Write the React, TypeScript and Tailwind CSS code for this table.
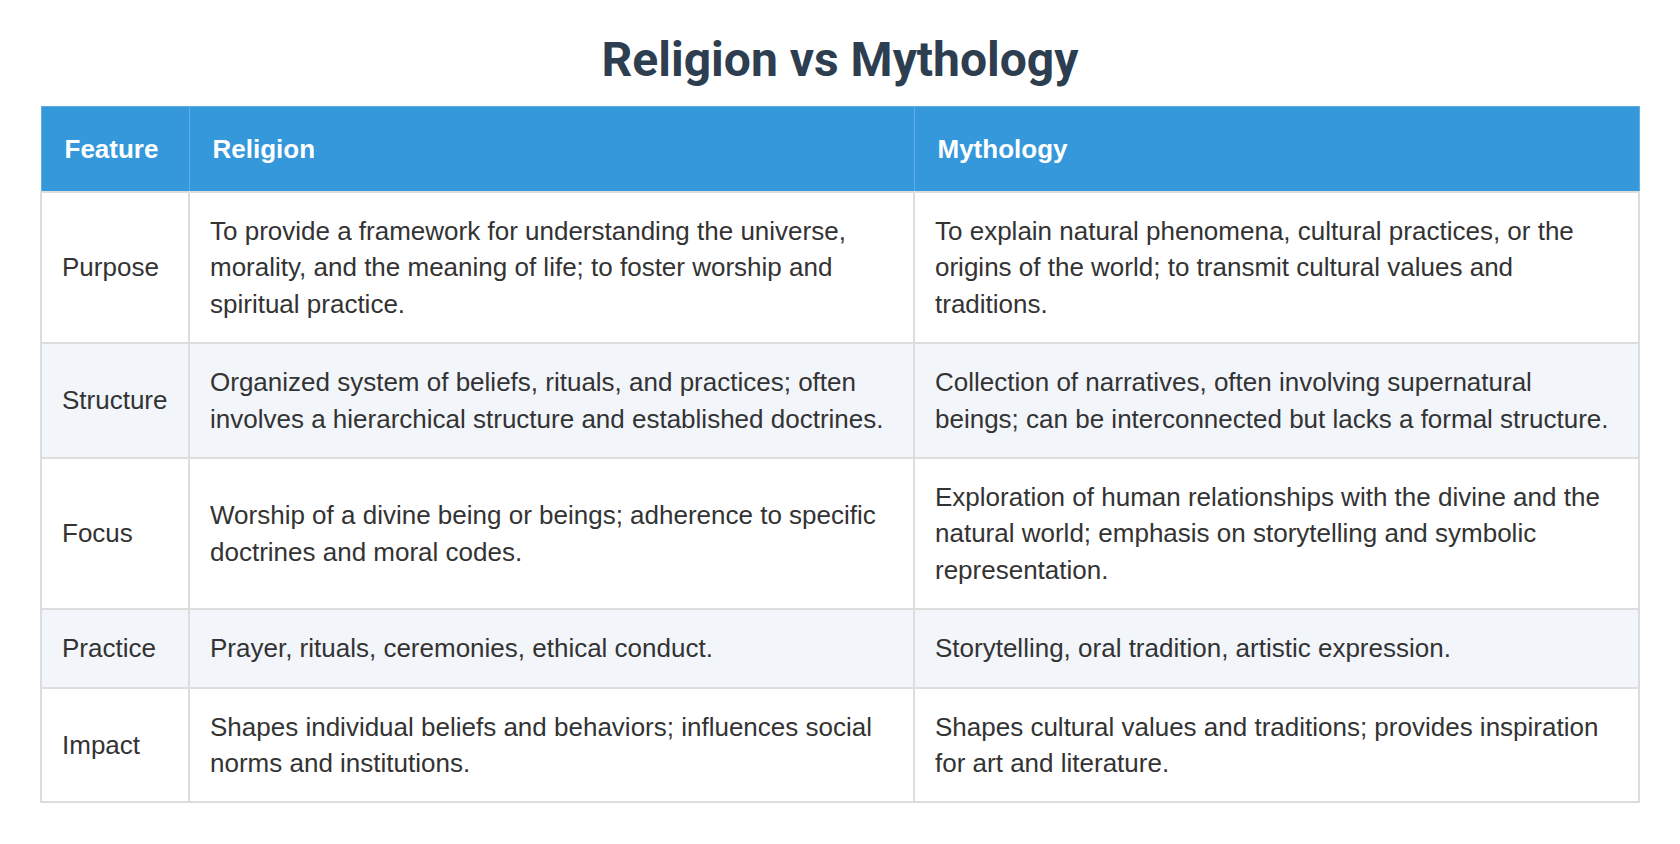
const rows = [
  {
    feature: "Purpose",
    religion:
      "To provide a framework for understanding the universe, morality, and the meaning of life; to foster worship and spiritual practice.",
    mythology:
      "To explain natural phenomena, cultural practices, or the origins of the world; to transmit cultural values and traditions.",
  },
  {
    feature: "Structure",
    religion:
      "Organized system of beliefs, rituals, and practices; often involves a hierarchical structure and established doctrines.",
    mythology:
      "Collection of narratives, often involving supernatural beings; can be interconnected but lacks a formal structure.",
  },
  {
    feature: "Focus",
    religion: "Worship of a divine being or beings; adherence to specific doctrines and moral codes.",
    mythology:
      "Exploration of human relationships with the divine and the natural world; emphasis on storytelling and symbolic representation.",
  },
  {
    feature: "Practice",
    religion: "Prayer, rituals, ceremonies, ethical conduct.",
    mythology: "Storytelling, oral tradition, artistic expression.",
  },
  {
    feature: "Impact",
    religion: "Shapes individual beliefs and behaviors; influences social norms and institutions.",
    mythology: "Shapes cultural values and traditions; provides inspiration for art and literature.",
  },
];

export default function App() {
  return (
    <div className="min-h-screen bg-white px-10 pt-[31px] font-['Liberation_Sans',Arial,sans-serif] text-[#333333]">
      <h1 className="mb-[17px] text-center font-['Roboto',Arial,sans-serif] text-[48px] font-bold leading-[1.2] text-[#2c3e50]">
        Religion vs Mythology
      </h1>

      <table className="w-full table-fixed border-collapse text-[26px] leading-[1.4]">
        <colgroup>
          <col className="w-[148px]" />
          <col />
          <col />
        </colgroup>
        <thead>
          <tr className="bg-[#3498db] text-left text-white">
            <th className="border border-[#5faee3] px-[23px] py-6 font-bold">Feature</th>
            <th className="border border-[#5faee3] px-[23px] py-6 font-bold">Religion</th>
            <th className="border border-[#5faee3] px-[23px] py-6 font-bold">Mythology</th>
          </tr>
        </thead>
        <tbody>
          {rows.map((row, i) => (
            <tr key={row.feature} className={i % 2 === 1 ? "bg-[#f2f5fa]" : "bg-white"}>
              <td className="border-2 border-[#dddddd] px-5 py-5 align-middle">{row.feature}</td>
              <td className="border-2 border-[#dddddd] px-5 py-5 align-middle">{row.religion}</td>
              <td className="border-2 border-[#dddddd] px-5 py-5 align-middle">{row.mythology}</td>
            </tr>
          ))}
        </tbody>
      </table>
    </div>
  );
}
